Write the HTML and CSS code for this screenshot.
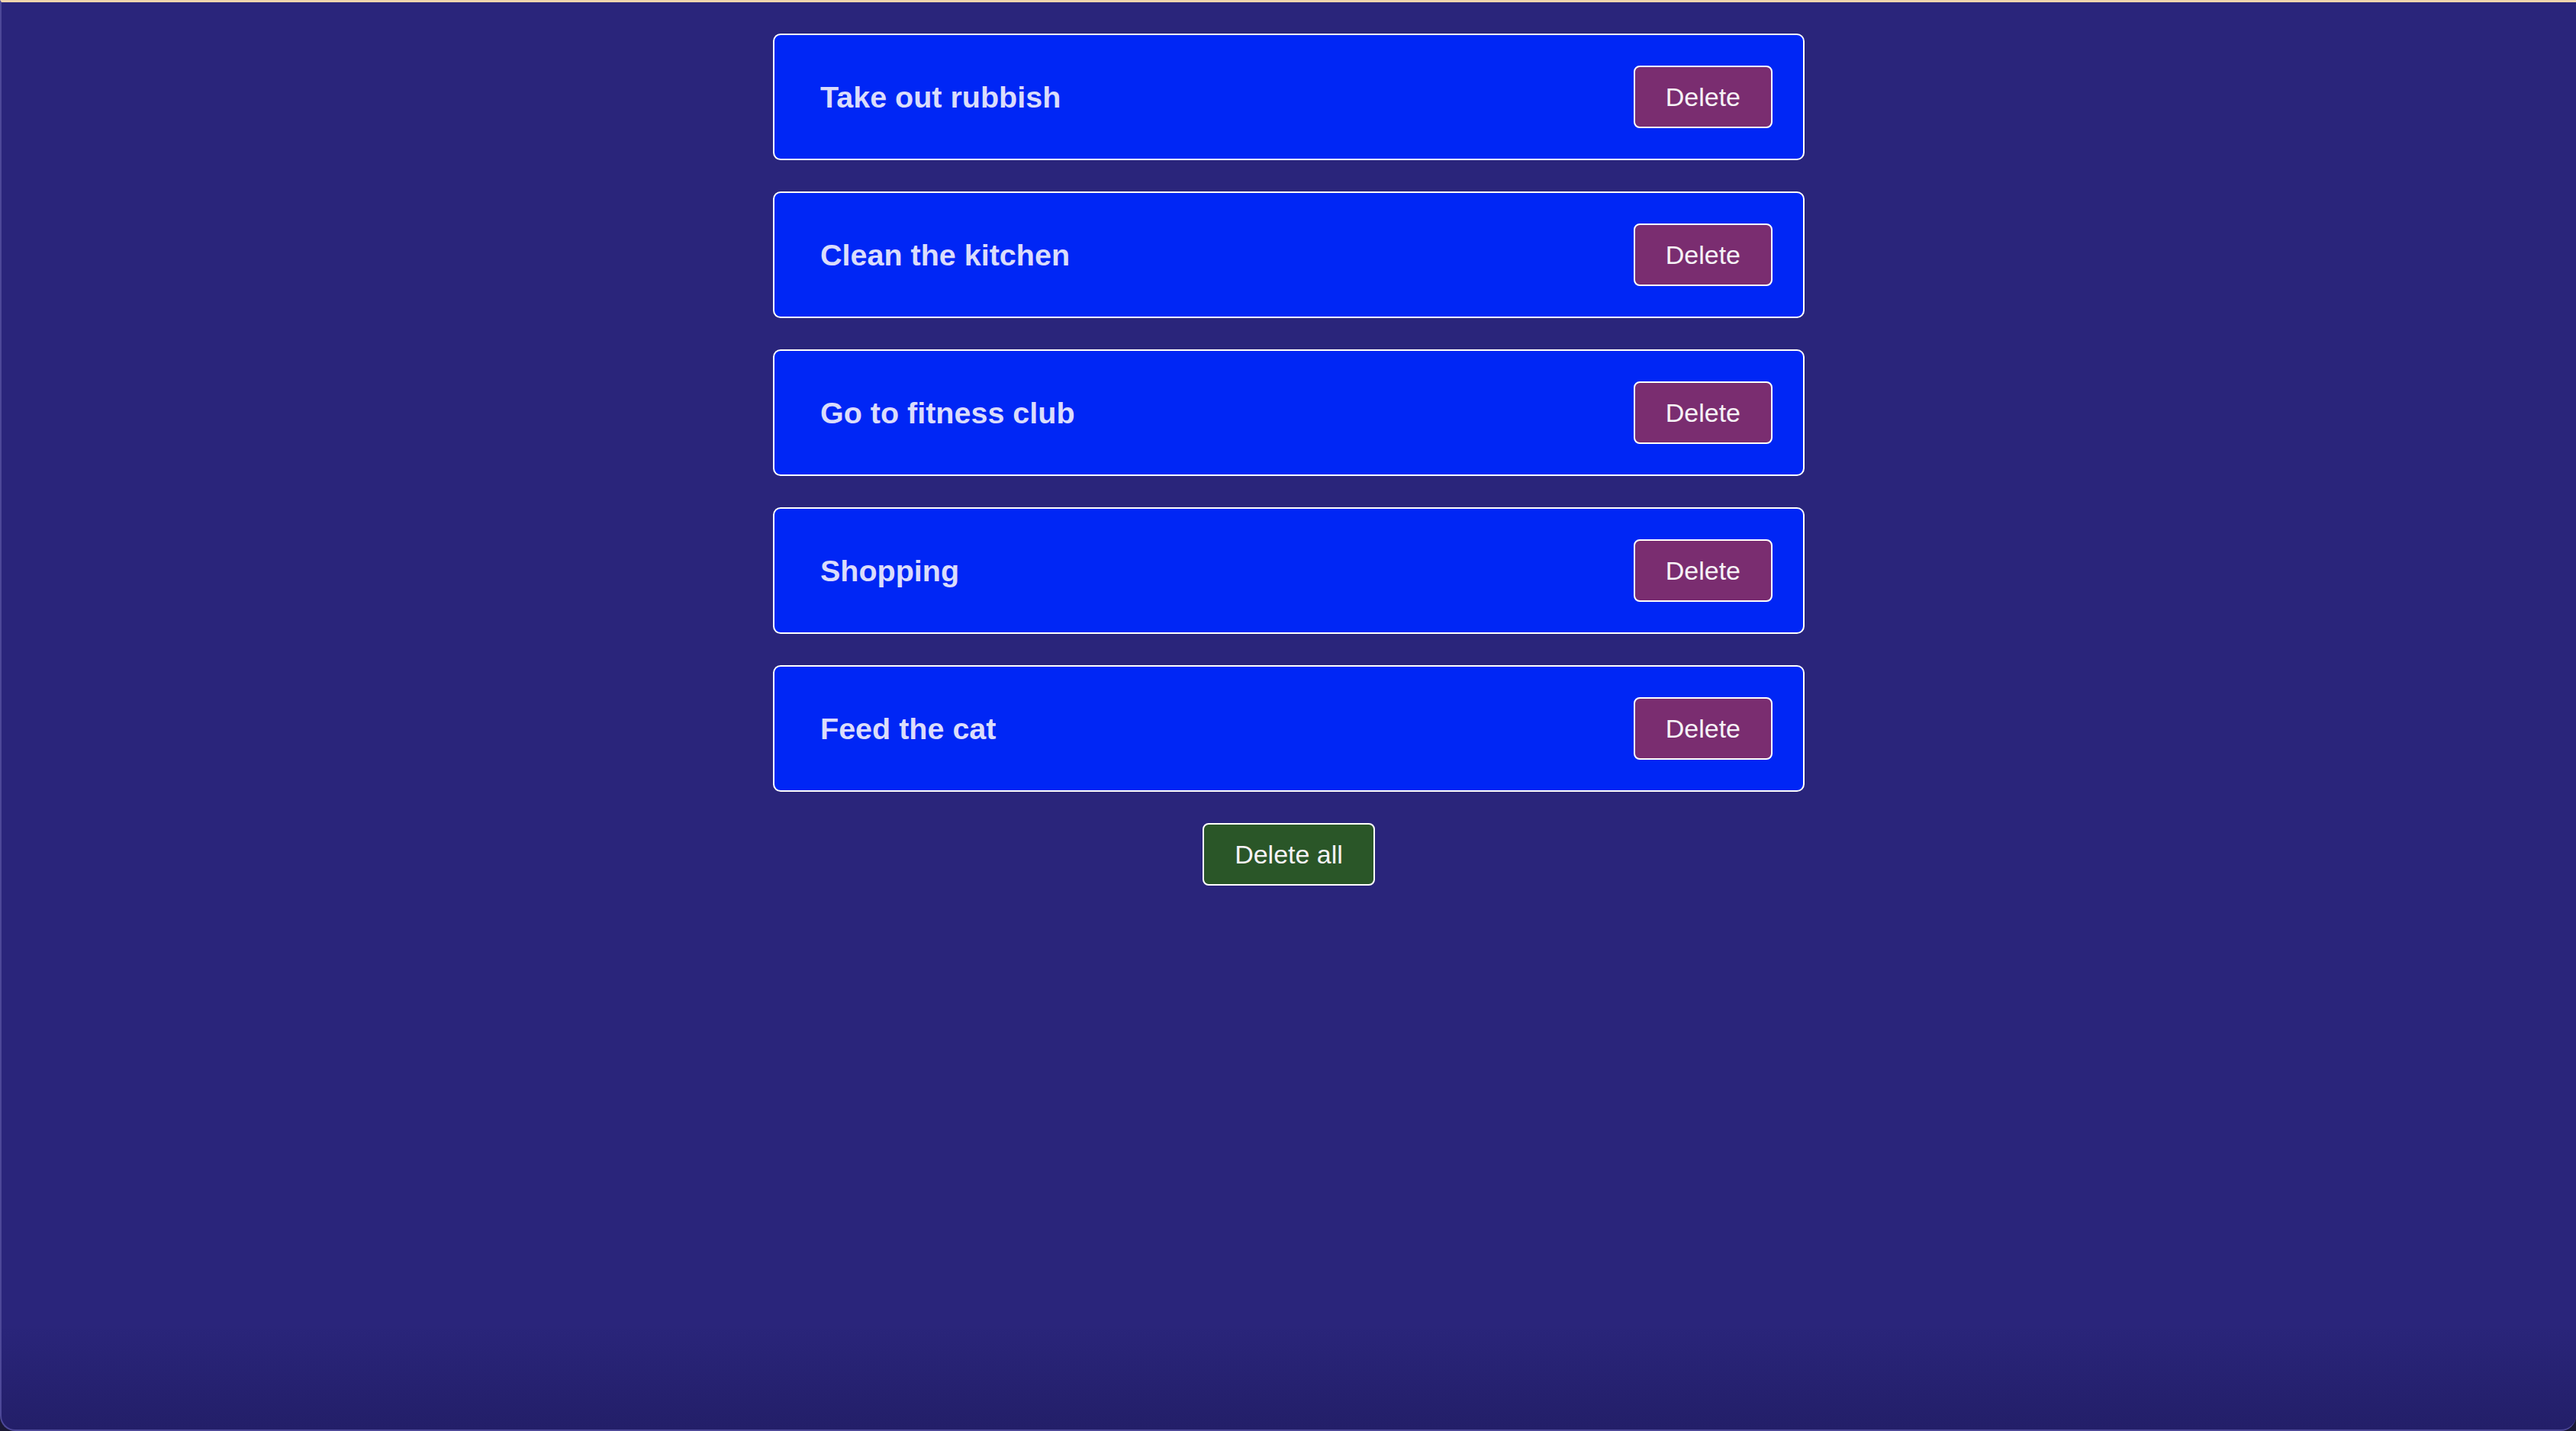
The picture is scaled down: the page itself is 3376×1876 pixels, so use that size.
FILE: index.html
```html
<!DOCTYPE html>
<html lang="en">
<head>
<meta charset="utf-8">
<title>Todo list</title>
<link rel="stylesheet" href="styles.css">
</head>
<body>
<div class="window">
  <main class="todo">
    <ul class="todo-list">
      <li class="todo-item"><span class="todo-text">Take out rubbish</span><button class="btn btn-delete">Delete</button></li>
      <li class="todo-item"><span class="todo-text">Clean the kitchen</span><button class="btn btn-delete">Delete</button></li>
      <li class="todo-item"><span class="todo-text">Go to fitness club</span><button class="btn btn-delete">Delete</button></li>
      <li class="todo-item"><span class="todo-text">Shopping</span><button class="btn btn-delete">Delete</button></li>
      <li class="todo-item"><span class="todo-text">Feed the cat</span><button class="btn btn-delete">Delete</button></li>
    </ul>
    <button class="btn btn-delete-all">Delete all</button>
  </main>
</div>
</body>
</html>
```

FILE: styles.css
```css
* {
  box-sizing: border-box;
}

html, body {
  margin: 0;
  padding: 0;
  height: 100%;
}

body {
  background: #1a1836;
  font-family: "Liberation Sans", Arial, sans-serif;
}

.window {
  height: 100%;
  background-color: #2a257b;
  background-image: linear-gradient(to bottom, rgba(0, 0, 0, 0) calc(100% - 140px), rgba(10, 8, 40, 0.22) 100%);
  border-top: 3px solid #efd5ae;
  border-left: 2px solid #4d4898;
  border-bottom: 2px solid #4d4898;
  border-radius: 0 0 20px 20px;
  overflow: hidden;
}

.todo {
  display: flex;
  flex-direction: column;
  align-items: center;
  padding-top: 41px;
}

.todo-list {
  list-style: none;
  margin: 0;
  padding: 0;
  width: 1352px;
  display: flex;
  flex-direction: column;
  gap: 41px;
}

.todo-item {
  display: flex;
  align-items: center;
  justify-content: space-between;
  background: #0026f5;
  border: 2px solid #ffffff;
  border-radius: 10px;
  padding: 40px 40px 40px 60px;
}

.todo-text {
  color: #dadcfb;
  font-weight: bold;
  font-size: 39.5px;
}

.btn {
  font-family: "Liberation Sans", Arial, sans-serif;
  font-size: 34px;
  line-height: 38px;
  color: #f6f2f6;
  border: 2px solid #ffffff;
  border-radius: 8px;
  padding: 20px 40px;
  cursor: pointer;
}

.btn-delete {
  background: #7a2d70;
}

.btn-delete-all {
  background: #2a5628;
  margin-top: 41px;
}
```
